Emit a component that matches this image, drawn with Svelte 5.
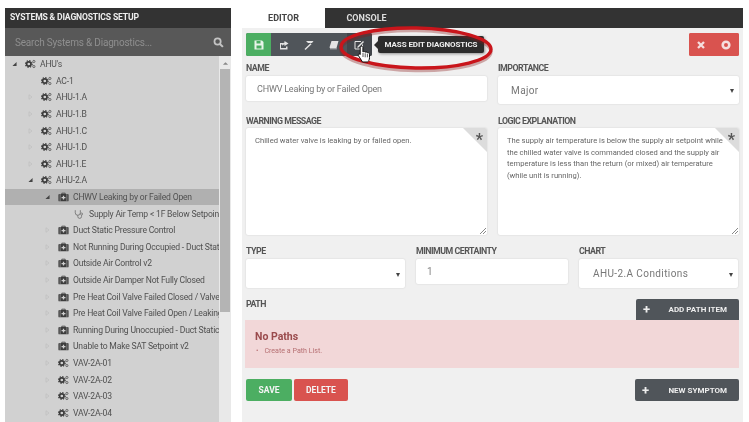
<script>
  const tree = [
    { label: "AHU's", level: 0, icon: 'cogs', arrow: 'open' },
    { label: 'AC-1', level: 1, icon: 'cogs' },
    { label: 'AHU-1.A', level: 1, icon: 'cogs', arrow: 'closed' },
    { label: 'AHU-1.B', level: 1, icon: 'cogs', arrow: 'closed' },
    { label: 'AHU-1.C', level: 1, icon: 'cogs', arrow: 'closed' },
    { label: 'AHU-1.D', level: 1, icon: 'cogs', arrow: 'closed' },
    { label: 'AHU-1.E', level: 1, icon: 'cogs', arrow: 'closed' },
    { label: 'AHU-2.A', level: 1, icon: 'cogs', arrow: 'open' },
    { label: 'CHWV Leaking by or Failed Open', level: 2, icon: 'kit', arrow: 'open', selected: true },
    { label: 'Supply Air Temp < 1F Below Setpoint', level: 3, icon: 'steth' },
    { label: 'Duct Static Pressure Control', level: 2, icon: 'kit', arrow: 'closed' },
    { label: 'Not Running During Occupied - Duct Static', level: 2, icon: 'kit', arrow: 'closed' },
    { label: 'Outside Air Control v2', level: 2, icon: 'kit', arrow: 'closed' },
    { label: 'Outside Air Damper Not Fully Closed', level: 2, icon: 'kit', arrow: 'closed' },
    { label: 'Pre Heat Coil Valve Failed Closed / Valve', level: 2, icon: 'kit', arrow: 'closed' },
    { label: 'Pre Heat Coil Valve Failed Open / Leaking', level: 2, icon: 'kit', arrow: 'closed' },
    { label: 'Running During Unoccupied - Duct Static', level: 2, icon: 'kit', arrow: 'closed' },
    { label: 'Unable to Make SAT Setpoint v2', level: 2, icon: 'kit', arrow: 'closed' },
    { label: 'VAV-2A-01', level: 2, icon: 'cogs', arrow: 'closed' },
    { label: 'VAV-2A-02', level: 2, icon: 'cogs', arrow: 'closed' },
    { label: 'VAV-2A-03', level: 2, icon: 'cogs', arrow: 'closed' },
    { label: 'VAV-2A-04', level: 2, icon: 'cogs', arrow: 'closed' }
  ];
</script>

{#snippet cogs()}
  <svg class="ticon" viewBox="0 0 13 11">
    <circle cx="4.5" cy="5.5" r="2.6" fill="none" stroke="#3c3c3c" stroke-width="2" />
    <circle cx="4.5" cy="5.5" r="4" fill="none" stroke="#3c3c3c" stroke-width="1.3" stroke-dasharray="1.6 1.54" />
    <circle cx="10.5" cy="2.5" r="1.3" fill="none" stroke="#555" stroke-width="1" />
    <circle cx="10.5" cy="8.5" r="1.3" fill="none" stroke="#555" stroke-width="1" />
  </svg>
{/snippet}

{#snippet kit()}
  <svg class="ticon" viewBox="0 0 13 11">
    <path d="M4.5 2V1h4v1" fill="none" stroke="#3c3c3c" stroke-width="1" />
    <rect x="0.5" y="2" width="12" height="8.5" rx="1" fill="#3c3c3c" />
    <path d="M6.5 4v4.5M4.2 6.2h4.6" stroke="#d0d0d0" stroke-width="1.5" />
    <path d="M2.5 2v8.5M10.5 2v8.5" stroke="#d0d0d0" stroke-width="0.6" />
  </svg>
{/snippet}

{#snippet steth()}
  <svg class="ticon" viewBox="0 0 13 11">
    <path d="M1.5 1v3a3 3 0 0 0 6 0V1M4.5 7v1.5a2.2 2.2 0 0 0 4.4 0V7" fill="none" stroke="#666" stroke-width="0.9" />
    <circle cx="9" cy="5.5" r="1.2" fill="none" stroke="#666" stroke-width="0.8" />
  </svg>
{/snippet}

<div class="page">
  <aside class="sidebar">
    <div class="side-title">SYSTEMS &amp; DIAGNOSTICS SETUP</div>
    <div class="search">
      <span>Search Systems &amp; Diagnostics...</span>
      <svg class="search-icon" viewBox="0 0 12 12">
        <circle cx="5" cy="5" r="3.4" fill="none" stroke="#c4c4c4" stroke-width="1.9" />
        <path d="M7.6 7.6l3.2 3.2" stroke="#c4c4c4" stroke-width="2.2" />
      </svg>
    </div>
    <div class="tree-wrap">
      <div class="tree">
        {#each tree as row}
          <div class="row lv{row.level}" class:selected={row.selected}>
            <span class="arrow">
              {#if row.arrow === 'open'}
                <svg viewBox="0 0 6 6"><path d="M5.5 0.5V5.5H0.5Z" fill="#444" /></svg>
              {:else if row.arrow === 'closed'}
                <svg viewBox="0 0 6 8"><path d="M1 1L5 4L1 7Z" fill="none" stroke="#bcbcbc" stroke-width="0.8" /></svg>
              {/if}
            </span>
            {#if row.icon === 'cogs'}{@render cogs()}{:else if row.icon === 'kit'}{@render kit()}{:else}{@render steth()}{/if}
            <span class="row-text">{row.label}</span>
          </div>
        {/each}
      </div>
      <div class="scrollbar">
        <svg class="scroll-up" viewBox="0 0 8 5"><path d="M4 1L7 4H1Z" fill="#888" /></svg>
        <div class="thumb"></div>
      </div>
    </div>
  </aside>

  <main class="editor">
    <div class="tabs">
      <div class="tab active">EDITOR</div>
      <div class="tab">CONSOLE</div>
    </div>
    <div class="panel">
      <div class="toolbar">
        <div class="btn-group">
          <span class="tool green">
            <svg viewBox="0 0 10 10"><path d="M0.5 0.5H8L9.5 2V9.5H0.5Z" fill="#e8f5e9" /><rect x="2.5" y="1" width="4" height="2.5" fill="#4cae62" /><rect x="2.5" y="5.5" width="5" height="3" fill="#4cae62" /></svg>
          </span>
          <span class="tool">
            <svg viewBox="0 0 10 10"><path d="M1 3H4V4.5H2V8H7V6.5H8.5V9.5H1Z M5.5 1L9.5 3.5L5.5 6V4.5C4.5 4.5 3.5 5 3 6C3 4 4 2.8 5.5 2.5Z" fill="#e4e4e4" /></svg>
          </span>
          <span class="tool">
            <svg viewBox="0 0 10 10"><path d="M0.5 9L6.5 3.2L7.5 4.2L1.5 10Z" fill="#e4e4e4" /><path d="M2 1H9.5L8 3H4Z" fill="#e4e4e4" /></svg>
          </span>
          <span class="tool">
            <svg viewBox="0 0 10 10"><path d="M2.5 1H9.5L7.5 8H1C0.5 8 0.5 7 0.8 6.5Z" fill="#e4e4e4" /><path d="M1 8.8H7.8" stroke="#e4e4e4" stroke-width="0.8" /></svg>
          </span>
          <span class="tool hover">
            <svg viewBox="0 0 10 10"><path d="M7 1.5H1V9H8.5V4.5" fill="none" stroke="#e4e4e4" stroke-width="1" /><path d="M3.5 6.5L9 1L10 2L4.5 7.5L3.3 7.7Z" fill="#e4e4e4" /></svg>
          </span>
        </div>
        <div class="tooltip">MASS EDIT DIAGNOSTICS</div>
        <div class="btn-group danger">
          <span class="tool red">
            <svg viewBox="0 0 10 10"><path d="M2 2L8 8M8 2L2 8" stroke="#f5dede" stroke-width="2.3" /></svg>
          </span>
          <span class="tool red">
            <svg viewBox="0 0 10 10"><circle cx="5" cy="5" r="3.3" fill="none" stroke="#f5dede" stroke-width="2.6" /></svg>
          </span>
        </div>
      </div>

      <div class="two-col first">
        <div class="field">
          <span class="label">NAME</span>
          <div class="input name">CHWV Leaking by or Failed Open</div>
        </div>
        <div class="field">
          <span class="label">IMPORTANCE</span>
          <div class="input select tall">Major<i class="caret"></i></div>
        </div>
      </div>

      <div class="two-col second">
        <div class="field">
          <span class="label">WARNING MESSAGE</span>
          <div class="area">
            Chilled water valve is leaking by or failed open.
            <b class="corner"></b><b class="star">*</b><i class="grip"></i>
          </div>
        </div>
        <div class="field">
          <span class="label">LOGIC EXPLANATION</span>
          <div class="area">
            The supply air temperature is below the supply air setpoint while the chilled water valve is commanded closed and the supply air temperature is less than the return (or mixed) air temperature (while unit is running).
            <b class="corner"></b><b class="star">*</b><i class="grip"></i>
          </div>
        </div>
      </div>

      <div class="three-col">
        <div class="field">
          <span class="label">TYPE</span>
          <div class="input select short"><i class="caret"></i></div>
        </div>
        <div class="field">
          <span class="label">MINIMUM CERTAINTY</span>
          <div class="input cert">1</div>
        </div>
        <div class="field">
          <span class="label">CHART</span>
          <div class="input select short">AHU-2.A Conditions<i class="caret"></i></div>
        </div>
      </div>

      <div class="path-head">
        <span class="label">PATH</span>
        <div class="dark-btn add"><span class="plus">+</span>ADD PATH ITEM</div>
      </div>
      <div class="alert">
        <div class="alert-title">No Paths</div>
        <div class="alert-item"><span class="dot">•</span>Create a Path List.</div>
      </div>

      <div class="actions">
        <div class="action save">SAVE</div>
        <div class="action del">DELETE</div>
        <div class="dark-btn symptom"><span class="plus">+</span>NEW SYMPTOM</div>
      </div>
    </div>
  </main>

  <svg class="callout" viewBox="0 0 170 60">
    <ellipse cx="84" cy="30" rx="75" ry="20" fill="none" stroke="#8a1a1a" stroke-opacity="0.35" stroke-width="3.5" transform="rotate(1 84 30) translate(0 1.5)" />
    <ellipse cx="84" cy="29" rx="75" ry="20" fill="none" stroke="#c9151b" stroke-width="3.4" transform="rotate(1 84 29)" />
  </svg>
  <svg class="hand" viewBox="0 0 14 18">
    <path d="M4.5 1.2c1 0 1.4.7 1.4 1.5v4.200c1-.6 2 -.3 2.300.3c.9-.5 1.800-.2 2.100.5c1-.4 2.200.2 2.200 1.500v3.500c0 2-1 3.800-2 4.300H5.500L1.400 10.600c-.7-1 .6-2.300 1.700-1.400l.1.300V2.700c0-.8.4-1.500 1.300-1.500z" fill="#fff" stroke="#111" stroke-width="1" />
    <path d="M6 8v4M8.200 8.300v4M10.400 8.800v3.500" stroke="#111" stroke-width="0.7" />
  </svg>
</div>

<style>
  :global(body) {
    margin: 0;
    background: #fff;
  }

  .page {
    position: relative;
    display: flex;
    width: 749px;
    height: 422px;
    padding: 8px 0 0 5px;
    box-sizing: border-box;
    overflow: hidden;
    font-family: Roboto, "Liberation Sans", sans-serif;
    color: #555;
    /* the source is a soft, upscaled capture */
    filter: blur(0.3px);
  }

  .sidebar {
    width: 226px;
    flex: none;
    display: flex;
    flex-direction: column;
  }

  .side-title {
    height: 20px;
    line-height: 19px;
    padding-left: 5px;
    background: #333;
    color: #eee;
    font-size: 8.6px;
    font-weight: 700;
    letter-spacing: -0.17px;
    white-space: nowrap;
  }

  .search {
    height: 28px;
    display: flex;
    align-items: center;
    justify-content: space-between;
    padding: 0 7px 0 10px;
    background: #585858;
    color: #8f8f8f;
    font-size: 10px;
    letter-spacing: -0.2px;
  }

  .search-icon {
    width: 11px;
    height: 11px;
  }

  .tree-wrap {
    flex: 1;
    display: flex;
    min-height: 0;
    background: #d1d1d1;
  }

  .tree {
    flex: 1;
    min-width: 0;
    overflow: hidden;
  }

  .row {
    height: 16.6px;
    display: flex;
    align-items: center;
    font-size: 8.6px;
    letter-spacing: -0.2px;
    color: #505050;
    white-space: nowrap;
    overflow: hidden;
  }

  .row.selected {
    background: #b0b0b0;
  }

  .lv0 { padding-left: 6px; }
  .lv1 { padding-left: 22px; }
  .lv2 { padding-left: 39px; }
  .lv3 { padding-left: 55px; }

  .arrow {
    width: 14px;
    box-sizing: border-box;
    flex: none;
    display: flex;
    align-items: center;
    padding-left: 1px;
  }

  .arrow svg {
    width: 5px;
    height: 6px;
  }

  .ticon {
    width: 11px;
    height: 10px;
    flex: none;
    margin-right: 4px;
  }

  .row-text {
    flex: none;
  }

  .scrollbar {
    width: 12px;
    flex: none;
    background: #e9e9e9;
    padding: 0 1px;
    box-sizing: border-box;
  }

  .scroll-up {
    display: block;
    width: 7px;
    height: 5px;
    margin: 5px auto 3px;
  }

  .thumb {
    height: 243px;
    background: #b4b4b4;
  }

  .editor {
    width: 501px;
    flex: none;
    margin-left: 11px;
    display: flex;
    flex-direction: column;
  }

  .tabs {
    height: 20px;
    display: flex;
    background: #333;
    flex: none;
  }

  .tab {
    width: 83px;
    text-align: center;
    line-height: 20px;
    font-size: 9px;
    font-weight: 700;
    color: #ddd;
  }

  .tab.active {
    background: #fff;
    color: #444;
  }

  .panel {
    flex: 1;
    background: #f0f0f0;
    padding: 5px 4px 0;
  }

  .toolbar {
    position: relative;
    height: 23px;
    display: flex;
    justify-content: space-between;
  }

  .btn-group {
    display: flex;
    border-radius: 2px;
    overflow: hidden;
    background: #50555a;
  }

  .tool {
    width: 25.2px;
    display: flex;
    align-items: center;
    justify-content: center;
  }

  .tool svg {
    width: 10px;
    height: 10px;
  }

  .tool.green {
    background: #4cae62;
  }

  .tool.hover {
    background: #42464b;
  }

  .tool.red {
    background: #d9534f;
  }

  .danger {
    background: #d9534f;
  }

  .tooltip {
    position: absolute;
    left: 132px;
    top: 3px;
    width: 106px;
    height: 17px;
    border-radius: 2px;
    background: #2c2c2c;
    color: #eee;
    font-size: 8px;
    font-weight: 700;
    letter-spacing: -0.1px;
    line-height: 17px;
    text-align: center;
    white-space: nowrap;
    box-shadow: 1px 1px 3px rgba(0, 0, 0, 0.4);
  }

  .tooltip::before {
    content: "";
    position: absolute;
    left: -4px;
    top: 5px;
    border: 4px solid transparent;
    border-left: 0;
    border-right-color: #2c2c2c;
  }

  .two-col {
    display: grid;
    grid-template-columns: 241px 241px;
    column-gap: 11px;
  }

  .first {
    margin-top: 6px;
  }

  .second {
    margin-top: 11px;
  }

  .three-col {
    display: grid;
    grid-template-columns: 159px 152px 159px;
    column-gap: 11px;
    margin-top: 10px;
  }

  .field {
    display: flex;
    flex-direction: column;
    align-items: stretch;
    min-width: 0;
  }

  .label {
    height: 14px;
    line-height: 12px;
    font-size: 8.8px;
    font-weight: 700;
    letter-spacing: -0.5px;
    color: #555;
    white-space: nowrap;
  }

  .input {
    position: relative;
    background: #fff;
    border-radius: 2px;
    box-shadow: 0 0 2px rgba(0, 0, 0, 0.14);
    padding-left: 11px;
    font-size: 9px;
    letter-spacing: -0.2px;
    color: #777;
    display: flex;
    align-items: center;
  }

  .name {
    height: 25px;
  }

  .select {
    font-size: 10px;
    letter-spacing: 0.4px;
  }

  .tall {
    height: 28px;
    padding-left: 13px;
  }

  .short {
    height: 29px;
    padding-left: 14px;
  }

  .cert {
    height: 25px;
    padding-left: 11px;
    font-size: 10px;
    color: #888;
  }

  .caret {
    position: absolute;
    right: 5px;
    top: 50%;
    margin-top: -1px;
    border: 2.5px solid transparent;
    border-top: 4px solid #444;
    border-bottom: 0;
  }

  .area {
    position: relative;
    height: 107px;
    box-sizing: border-box;
    margin-top: -1px;
    padding: 7px 12px 0 9px;
    background: #fff;
    border-radius: 2px;
    box-shadow: 0 0 2px rgba(0, 0, 0, 0.14);
    font-size: 7.6px;
    line-height: 11.5px;
    color: #666;
    overflow: hidden;
  }

  .corner {
    position: absolute;
    top: 0;
    right: 0;
    border-top: 24px solid #dcdcdc;
    border-left: 24px solid transparent;
  }

  .star {
    position: absolute;
    top: 5px;
    right: 4px;
    font-size: 16px;
    line-height: 14px;
    color: #555;
  }

  .grip {
    position: absolute;
    right: 1px;
    bottom: 1px;
    width: 6px;
    height: 6px;
    background: linear-gradient(135deg, transparent 45%, #888 45%, #888 55%, transparent 55%, transparent 72%, #888 72%, #888 82%, transparent 82%);
  }

  .path-head {
    display: flex;
    justify-content: space-between;
    margin-top: 10px;
    height: 22px;
  }

  .dark-btn {
    display: flex;
    align-items: center;
    justify-content: space-between;
    box-sizing: border-box;
    background: #50555a;
    color: #eee;
    font-size: 8px;
    font-weight: 700;
    border-radius: 2px 2px 0 0;
    padding: 0 12px 0 7px;
  }

  .add {
    width: 103px;
    height: 21px;
    margin-top: 1px;
  }

  .plus {
    font-size: 13px;
    font-weight: 700;
  }

  .alert {
    height: 48px;
    box-sizing: border-box;
    margin-left: -1px;
    padding: 10px 10px 0;
    background: #f2d7d8;
    color: #a94442;
  }

  .alert-title {
    font-size: 10.5px;
    font-weight: 700;
    line-height: 14px;
    color: #9a4a4c;
  }

  .alert-item {
    font-size: 7.1px;
    line-height: 13px;
    color: #b66f72;
  }

  .dot {
    margin: 0 6px 0 1px;
  }

  .actions {
    display: flex;
    gap: 2px;
    margin-top: 11px;
  }

  .action {
    height: 22px;
    line-height: 22px;
    text-align: center;
    border-radius: 2px;
    color: #f4f4f4;
    font-size: 8.5px;
    font-weight: 700;
  }

  .save {
    width: 46px;
    background: #4cae62;
  }

  .del {
    width: 54px;
    background: #d9534f;
  }

  .symptom {
    width: 104px;
    height: 22px;
    margin-left: auto;
    border-radius: 2px;
  }

  .callout {
    position: absolute;
    left: 332px;
    top: 19px;
    width: 170px;
    height: 60px;
    pointer-events: none;
  }

  .hand {
    position: absolute;
    left: 357px;
    top: 45px;
    width: 14px;
    height: 18px;
    pointer-events: none;
  }
</style>
